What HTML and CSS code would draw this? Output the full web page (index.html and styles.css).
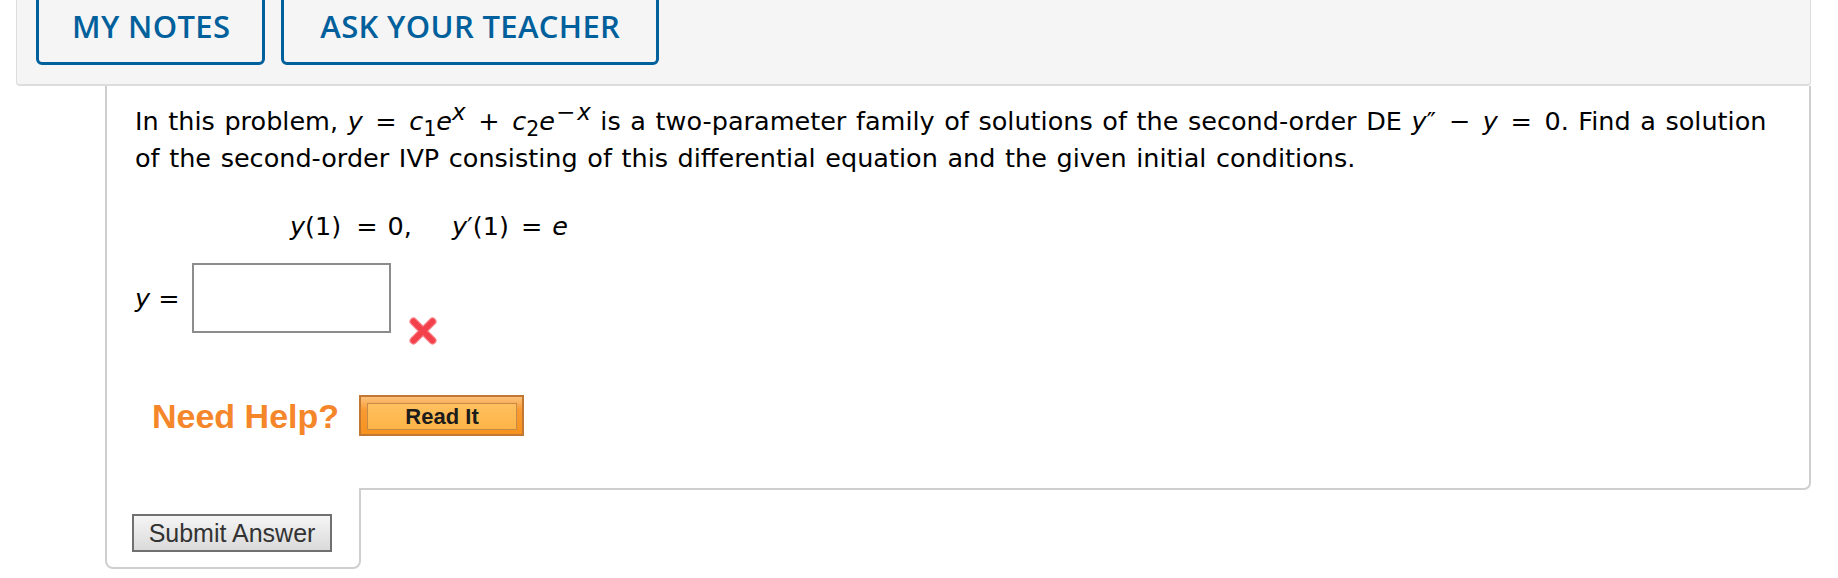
FILE: index.html
```html
<!DOCTYPE html>
<html>
<head>
<meta charset="utf-8">
<title>Question</title>
<link rel="stylesheet" href="styles.css">
</head>
<body>
<div class="page">
  <div class="toolbar">
    <button class="tool-btn tool-btn-notes">MY NOTES</button>
    <button class="tool-btn tool-btn-ask">ASK YOUR TEACHER</button>
  </div>
  <div class="question">
    <div class="q-main">
      <p class="prompt">In this problem, <i>y</i> <span class="op">=</span> <i>c</i><sub>1</sub><i>e</i><sup><i>x</i></sup> <span class="op">+</span> <i>c</i><sub>2</sub><i>e</i><sup><span class="op-s">−</span><i>x</i></sup> is a two-parameter family of solutions of the second-order DE <i>y</i>″ <span class="op">−</span> <i>y</i> <span class="op">=</span> 0. Find a solution of the second-order IVP consisting of this differential equation and the given initial conditions.</p>
      <div class="conditions"><span class="cond"><i>y</i>(1)<span class="eq">=</span>0,</span><span class="cond cond-2"><i>y</i>′(1)<span class="eq">=</span><i>e</i></span></div>
      <div class="answer-row">
        <span class="ans-label"><i>y</i> =</span>
        <input class="ans-input" type="text" aria-label="y">
        <svg class="wrong" viewBox="0 0 28 28" width="28" height="28" aria-hidden="true">
          <path d="M4.5 4.5L23.5 23.5M23.5 4.5L4.5 23.5" stroke="#fb7f86" stroke-width="8" stroke-linecap="round" fill="none"/>
          <path d="M4.5 4.5L23.5 23.5M23.5 4.5L4.5 23.5" stroke="#f2414b" stroke-width="5.5" stroke-linecap="round" fill="none"/>
        </svg>
      </div>
      <div class="help-row">
        <span class="need-help">Need Help?</span>
        <button class="read-it"><span class="read-it-inner">Read It</span></button>
      </div>
    </div>
    <div class="submit-box">
      <button class="submit">Submit Answer</button>
    </div>
  </div>
</div>
</body>
</html>
```
FILE: styles.css
```css
* {
  box-sizing: border-box;
}

body {
  margin: 0;
  background: #ffffff;
  font-family: "DejaVu Sans", Verdana, sans-serif;
  color: #000000;
}

.page {
  padding: 0 27px 0 16px;
}

/* top toolbar */
.toolbar {
  display: flex;
  gap: 16px;
  margin-top: -30px;
  padding: 19px;
  background: #f5f5f5;
  border: 1px solid #dddddd;
  border-bottom-width: 2px;
  border-radius: 0 0 4px 4px;
}

.tool-btn {
  display: block;
  height: 75px;
  padding: 12px 34px 15px;
  font-family: "Open Sans", sans-serif;
  font-weight: 600;
  font-size: 31px;
  line-height: 42px;
  letter-spacing: 0.35px;
  color: #00609c;
  background: transparent;
  border: 3px solid #00609c;
  border-radius: 6px;
}

.tool-btn-notes {
  padding-left: 33px;
  padding-right: 32px;
}

.tool-btn-ask {
  padding-left: 36px;
  padding-right: 36px;
}

/* question panel */
.question {
  margin-left: 89px;
}

.q-main {
  border: 2px solid #cfcfcf;
  border-top: none;
  border-radius: 0 0 7px 0;
  padding: 17px 29px 52px 28px;
  font-size: 25.5px;
  line-height: 37px;
}

.prompt {
  margin: 0;
  word-spacing: 1.5px;
}

.op {
  margin: 0 3px;
}

.op-s {
  margin: 0 2px 0 1px;
}

.prompt sub,
.prompt sup {
  line-height: 0;
}

.prompt sub {
  font-size: 0.8em;
  vertical-align: -0.3em;
}

.prompt sup {
  font-size: 0.9em;
  vertical-align: 0.45em;
}

.conditions {
  margin-top: 31px;
  padding-left: 155px;
  display: flex;
}

.eq {
  margin: 0 10px 0 15px;
}

.cond-2 {
  margin-left: 40px;
}

.cond-2 .eq {
  margin: 0 10px 0 12px;
}

.answer-row {
  display: flex;
  align-items: flex-start;
  margin-top: 18px;
}

.ans-label {
  margin-top: 17px;
}

.ans-input {
  display: block;
  width: 199px;
  height: 70px;
  margin-left: 12px;
  border: 2px solid #8c8c8c;
  background: #ffffff;
  padding: 0 6px;
  font-size: 25px;
}

.wrong {
  display: block;
  margin-left: 18px;
  margin-top: 54px;
}

.help-row {
  display: flex;
  align-items: center;
  margin-top: 50px;
  padding-left: 17px;
}

.need-help {
  font-family: "Liberation Sans", Arial, sans-serif;
  font-weight: bold;
  font-size: 34px;
  line-height: 38px;
  color: #f5862a;
}

.read-it {
  display: block;
  margin-left: 20px;
  padding: 6px 5px 4px 6px;
  border: 2px solid #c27832;
  background: linear-gradient(#fcc27c 0%, #f89a33 35%, #f7931e 100%);
  cursor: pointer;
}

.read-it-inner {
  display: block;
  width: 150px;
  height: 27px;
  border: 1px solid #c48a46;
  background: linear-gradient(#ffc060, #fdb447);
  font-family: "Liberation Sans", Arial, sans-serif;
  font-weight: bold;
  font-size: 22px;
  line-height: 25px;
  color: #1c1c1c;
  text-align: center;
}

/* submit tab */
.submit-box {
  width: 256px;
  margin-top: -2px;
  padding: 26px 0 15px 25px;
  background: #ffffff;
  border: 2px solid #cfcfcf;
  border-top: none;
  border-radius: 0 0 8px 8px;
}

.submit {
  display: block;
  width: 200px;
  height: 38px;
  padding: 0;
  border: 2px solid #707070;
  background: linear-gradient(#f5f5f5, #dadada);
  font-family: "Liberation Sans", Arial, sans-serif;
  font-size: 25px;
  line-height: 34px;
  color: #333333;
}
```
